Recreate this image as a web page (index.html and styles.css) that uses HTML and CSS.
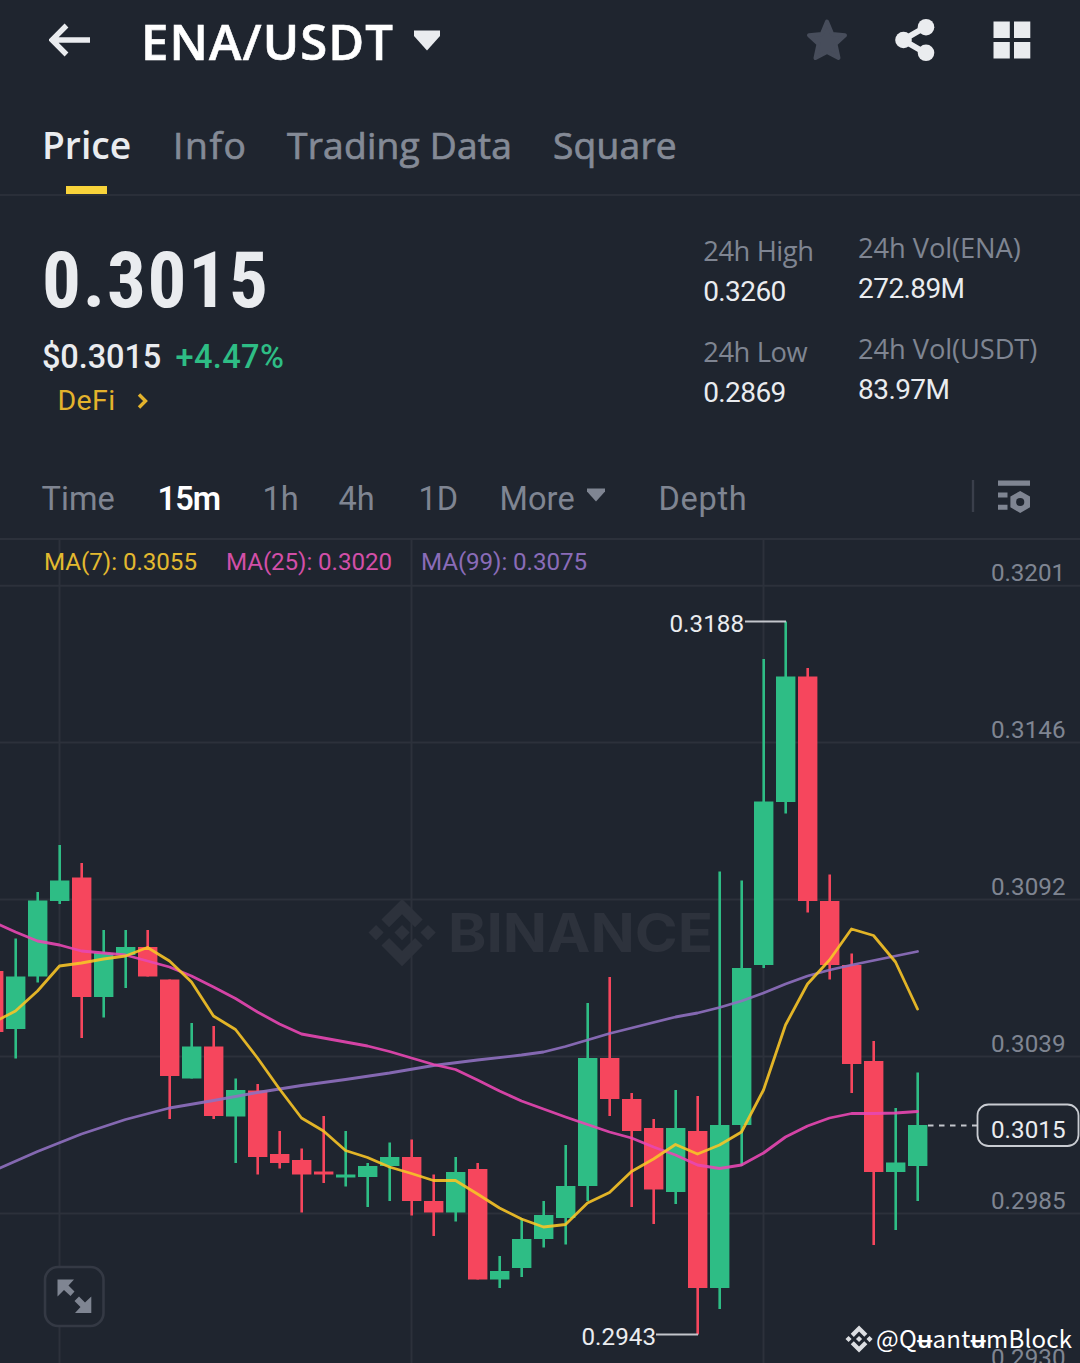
FILE: index.html
```html
<!DOCTYPE html>
<html lang="en">
<head>
<meta charset="utf-8">
<title>ENA/USDT</title>
<link rel="stylesheet" href="styles.css">
</head>
<body>
<header class="header">
  <svg class="back" width="42" height="34" viewBox="0 0 42 34"><path d="M17.500 2.500 3 17 17.500 31.500M3.500 17H41" fill="none" stroke="#eaecef" stroke-width="5.400"/></svg>
  <h1 class="pair">ENA/USDT</h1>
  <svg class="pair-caret" width="26" height="21" viewBox="0 0 26 21"><path d="M0 .5h26V6L13 20.500 0 6Z" fill="#eaecef"/></svg>
  <div class="actions">
    <svg width="42" height="44" viewBox="0 0 42 44"><path d="M21 3.500 26.200 16 39 17.200 29.500 26 32.500 40 21 34 9.500 40 12.500 26 3 17.200 15.800 16Z" fill="#474d5b" stroke="#474d5b" stroke-width="4" stroke-linejoin="round"/></svg>
    <svg width="40" height="44" viewBox="0 0 40 44"><path d="M30.500 9 8 22 30.500 35" fill="none" stroke="#eaecef" stroke-width="6"/><circle cx="8.500" cy="22" r="8.300" fill="#eaecef"/><circle cx="31" cy="9.200" r="8.300" fill="#eaecef"/><circle cx="31" cy="34.800" r="8.300" fill="#eaecef"/></svg>
    <svg width="38" height="44" viewBox="0 0 38 44"><path d="M.5 3.500h16.300V20H.5zM21 3.500h16.300V20H21zM.5 24h16.300v16.500H.5zM21 24h16.300v16.500H21z" fill="#eaecef"/></svg>
  </div>
</header>

<nav class="tabs">
  <span class="tab tab-active">Price</span>
  <span class="tab tab-wide">Info</span>
  <span class="tab">Trading Data</span>
  <span class="tab">Square</span>
</nav>

<section class="summary">
  <div class="price-block">
    <div class="last-price">0.3015</div>
    <div class="price-row"><span class="fiat">$0.3015</span><span class="change">+4.47%</span></div>
    <div class="category">DeFi<svg width="12" height="18" viewBox="0 0 12 18"><path d="M2 2.500 8.500 9 2 15.500" fill="none" stroke="#e3b32c" stroke-width="3.400"/></svg></div>
  </div>
  <div class="stats">
    <div class="stat"><span class="label">24h High</span><span class="value">0.3260</span></div>
    <div class="stat"><span class="label">24h Low</span><span class="value">0.2869</span></div>
  </div>
  <div class="stats stats-volume">
    <div class="stat"><span class="label">24h Vol(ENA)</span><span class="value">272.89M</span></div>
    <div class="stat"><span class="label">24h Vol(USDT)</span><span class="value">83.97M</span></div>
  </div>
</section>

<nav class="intervals">
  <span>Time</span>
  <span class="interval-active">15m</span>
  <span>1h</span>
  <span>4h</span>
  <span>1D</span>
  <span class="more">More<svg width="18" height="14" viewBox="0 0 18 14"><path d="M0 .5h18V3.500L9 13.500 0 3.500Z" fill="#7f8592"/></svg></span>
  <span class="depth">Depth</span>
  <svg class="settings" width="60" height="36" viewBox="0 0 60 36"><path d="M2 2V34" stroke="#3a3f4b" stroke-width="2.400"/><path d="M27 2.500h32v5.300H27zM27 14.500h9.500v5H27zM27 26.700h9.500v5H27z" fill="#7f8592"/><path fill-rule="evenodd" d="M49.200 13 59 18.500v10.800L49.200 35l-9.800-5.700V18.500ZM49.200 19.900a4.100 4.100 0 1 0 0 8.200 4.100 4.100 0 0 0 0-8.200Z" fill="#7f8592"/></svg>
</nav>

<main class="chart">
  <svg id="plot" width="1080" height="825" viewBox="0 538 1080 825">
    <g class="grid">
      <path d="M0 539H1080M0 585.800H1080M0 742.500H1080M0 899.500H1080M0 1056.500H1080M0 1213.500H1080M59.500 539V1363M411.500 539V1363M763.500 539V1363"/>
    </g>
    <g class="brand">
      <path transform="translate(368.500 899) scale(2.800)" d="M16.624 13.920l2.717 2.715-7.353 7.353-7.353-7.352 2.717-2.716 4.636 4.660 4.636-4.660zm4.637-4.637L24 12l-2.715 2.716L18.568 12l2.692-2.716zm-9.272.001l2.716 2.691-2.716 2.717L9.272 12l2.716-2.715zm-9.272-.001L5.409 12l-2.691 2.692L0 12l2.716-2.716zM11.989.012l7.353 7.329-2.717 2.715-4.636-4.636-4.636 4.660-2.717-2.715z"/>
      <text x="448" y="951.500" textLength="265" lengthAdjust="spacingAndGlyphs">BINANCE</text>
    </g>
    <g id="candles"></g>
    <g class="averages">
      <polyline class="ma99" points="0,1168 37.500,1151.500 81.500,1134 125.500,1119.500 169.500,1108 213.500,1100.500 257.500,1092.500 301.500,1085.500 345.500,1079.500 389.500,1073 433.500,1065.500 477.500,1060 521.500,1055 543.500,1052 565.500,1046.500 587.500,1040 609.500,1033.500 631.500,1028 675.500,1017 697.500,1013 719.500,1007.500 741.500,1001 763.500,993 785.500,984 807.500,976 829.500,970 851.500,965 895.500,956 917.500,951.500"/>
      <polyline class="ma25" points="0,925 15.500,932 37.500,941 59.500,945 81.500,951 103.500,953 125.500,955 147.500,961 169.500,967 191.500,976 213.500,987 235.500,998.500 257.500,1012 279.500,1024 301.500,1034 323.500,1038 345.500,1042 367.500,1046 389.500,1051.500 411.500,1058 433.500,1064.500 455.500,1069.500 477.500,1080 499.500,1091 521.500,1101 543.500,1109 565.500,1117 587.500,1124.500 609.500,1132 631.500,1138 653.500,1147 675.500,1155 697.500,1165 719.500,1168.500 741.500,1165 763.500,1153 785.500,1137 807.500,1126 829.500,1118 851.500,1113.500 873.500,1113.500 895.500,1113 917.500,1111.500"/>
      <polyline class="ma7" points="0,1019 15.500,1011 37.500,991 59.500,966 81.500,963 103.500,959 125.500,956 147.500,947.500 169.500,961 191.500,982 213.500,1016 235.500,1029.500 257.500,1058 279.500,1089 301.500,1118 323.500,1131 345.500,1150.500 367.500,1157.500 389.500,1167 411.500,1173.500 433.500,1180.500 455.500,1180.500 477.500,1194 499.500,1208 521.500,1219 543.500,1227 565.500,1224.500 587.500,1203 609.500,1192.500 631.500,1171.500 653.500,1159 675.500,1144.500 697.500,1154 719.500,1145 741.500,1132 763.500,1090 785.500,1025 807.500,984 829.500,960 851.500,929 873.500,935.500 895.500,962 917.500,1009"/>
    </g>
    <g class="legend">
      <text x="44" y="570.300" textLength="153" fill="#e3b92f">MA(7): 0.3055</text>
      <text x="226" y="570.300" textLength="166" fill="#d24fa8">MA(25): 0.3020</text>
      <text x="421" y="570.300" textLength="166" fill="#8a6cb8">MA(99): 0.3075</text>
    </g>
    <g class="axis">
      <text x="991" y="580.500" textLength="74">0.3201</text>
      <text x="991" y="737.500" textLength="74.500">0.3146</text>
      <text x="991" y="894.500" textLength="74.500">0.3092</text>
      <text x="991" y="1051.500" textLength="74.500">0.3039</text>
      <text x="991" y="1208.500" textLength="74.500">0.2985</text>
      <text x="991" y="1365.500" textLength="74.500">0.2930</text>
    </g>
    <g class="marks">
      <path d="M745 621.500H786M656 1334.500H698"/>
      <path d="M928 1125.500H977" stroke-dasharray="5.500 5.500"/>
      <rect x="977.500" y="1104.500" width="101" height="41.500" rx="11"/>
      <text x="669.500" y="631.500" textLength="74.500">0.3188</text>
      <text x="581.500" y="1344.500" textLength="74.500">0.2943</text>
      <text x="991" y="1137.500" textLength="74.500">0.3015</text>
    </g>
    <g class="expand">
      <rect x="45" y="1267" width="58.500" height="59" rx="13"/>
      <path d="M57.500 1279.500H74L68.500 1285.500 74.500 1291.500 70.500 1296 64 1290 57.500 1296.500ZM91.300 1313H75L80.500 1307 74.500 1301 79 1296.500 85 1302.500 91.300 1296.500Z"/>
    </g>
    <g class="credit">
      <path transform="translate(845.500 1325.500) scale(1.130)" d="M16.624 13.920l2.717 2.715-7.353 7.353-7.353-7.352 2.717-2.716 4.636 4.660 4.636-4.660zm4.637-4.637L24 12l-2.715 2.716L18.568 12l2.692-2.716zm-9.272.001l2.716 2.691-2.716 2.717L9.272 12l2.716-2.715zm-9.272-.001L5.409 12l-2.691 2.692L0 12l2.716-2.716zM11.989.012l7.353 7.329-2.717 2.715-4.636-4.636-4.636 4.660-2.717-2.715z"/>
      <text x="876" y="1347.500" textLength="196">@Q<tspan class="barred">ʉ</tspan>ant<tspan class="barred">ʉ</tspan>mBlock</text>
    </g>
  </svg>
</main>
<script src="chart.js"></script>
</body>
</html>
```
FILE: styles.css
```css
* { box-sizing: border-box; }

body {
  margin: 0;
  width: 1080px;
  height: 1363px;
  overflow: hidden;
  background: #1f252f;
  color: #eaecef;
  font-family: Roboto, "Liberation Sans", sans-serif;
}

svg { display: block; flex: none; }

.header {
  display: flex;
  align-items: center;
  height: 81px;
  padding: 0 49.5px 0 49px;
}

.back, .actions { margin-top: -1px; }

.pair {
  margin: 1px 0 0 50px;
  width: 273px;
  font: 600 49px/80px "Open Sans", sans-serif;
  letter-spacing: 1.1px;
  -webkit-text-stroke: 0.6px #fff;
  color: #fff;
  white-space: nowrap;
}

.pair-caret { margin-top: -1px; }

.actions {
  display: flex;
  align-items: center;
  margin-left: auto;
}

.actions svg:nth-child(2) { margin-left: 47px; }
.actions svg:nth-child(3) { margin-left: 58px; }

.tabs {
  display: grid;
  grid-template-columns: 131px 114px 266px auto;
  height: 115px;
  padding: 44px 0 0 42px;
  border-bottom: 2px solid #2a2f39;
}

.tab {
  position: relative;
  font: 500 37.2px/40px "Open Sans", sans-serif;
  letter-spacing: 0.2px;
  -webkit-text-stroke: 0.7px #848a96;
  color: #848a96;
  white-space: nowrap;
}

.tab-wide { letter-spacing: 1.6px; }

.tab-active {
  color: #eaecef;
  font-weight: 600;
  letter-spacing: 0;
  -webkit-text-stroke: 0;
}

.tab-active::after {
  content: "";
  position: absolute;
  left: 24px;
  bottom: 0;
  width: 41px;
  height: 8.5px;
  background: #f8d33a;
}

.summary {
  display: flex;
  height: 260px;
  padding-left: 42px;
}

.price-block {
  width: 661.5px;
  padding-top: 45px;
}

.last-price {
  font-size: 77px;
  line-height: 80px;
  font-weight: 700;
  font-stretch: 75%;
  letter-spacing: 1.8px;
}

.price-row {
  display: flex;
  margin-top: 15.5px;
  font-size: 32.5px;
  line-height: 40px;
  font-weight: 500;
}

.fiat { width: 133.5px; letter-spacing: -0.1px; }
.change { color: #2ebd85; letter-spacing: 0.4px; }

.category {
  display: flex;
  align-items: center;
  gap: 21px;
  margin-top: 6px;
  padding-left: 15.5px;
  font-size: 28.5px;
  line-height: 36px;
  letter-spacing: 0.4px;
  color: #e3b32c;
}

.stats {
  display: flex;
  flex-direction: column;
  gap: 24.6px;
  width: 155px;
  padding-top: 37px;
}

.stats-volume {
  width: 222px;
  padding-top: 34px;
}

.stat {
  display: flex;
  flex-direction: column;
  gap: 4.5px;
  font-size: 28px;
  line-height: 36px;
  white-space: nowrap;
}

.label {
  font-family: "Open Sans", sans-serif;
  font-size: 27.3px;
  letter-spacing: -0.1px;
  color: #7f8592;
}

.stats:not(.stats-volume) .label { letter-spacing: -0.4px; }

.value { letter-spacing: -0.6px; }

.intervals {
  display: grid;
  grid-template-columns: 116px 105px 76px 80px 81px 159px 312px auto;
  height: 82px;
  padding: 23px 0 0 41.5px;
  font-size: 32.5px;
  line-height: 40px;
  letter-spacing: 0.1px;
  color: #7f8592;
}

.interval-active { color: #fff; font-weight: 600; letter-spacing: -0.9px; }
.more { display: flex; gap: 12px; }
.more svg { margin-top: 9px; }
.depth { letter-spacing: 0.7px; }
.settings { margin-top: -1px; }

.grid path { fill: none; stroke: #2c313b; stroke-width: 2; }

.brand { fill: #2d323c; }
.brand text { font: 700 53px Inter, sans-serif; }

.up { fill: #2ebd85; }
.down { fill: #f6465d; }

.averages polyline {
  fill: none;
  stroke-width: 2.8;
  stroke-linejoin: round;
  stroke-linecap: round;
  opacity: 0.9;
}

.ma7 { stroke: #f7c427; }
.ma25 { stroke: #e847b2; }
.ma99 { stroke: #8f70c0; }

.legend text,
.axis text,
.marks text {
  font-size: 24.2px;
}

.axis text { fill: #7f8592; }

.marks path { fill: none; stroke: #c3c6cc; stroke-width: 2; }
.marks rect { fill: #1f252f; stroke: #c9ccd2; stroke-width: 1.8; }
.marks text { fill: #eaecef; }

.expand rect { fill: #1f252f; stroke: #343944; stroke-width: 2.6; }
.expand path { fill: #7f8592; }

.credit path { fill: #dcdee2; }
.credit text { fill: #fff; font: 400 24px "Noto Sans CJK SC", sans-serif; }
.credit .barred { font-family: "Noto Sans", sans-serif; font-weight: 600; }
```
FILE: chart.js
```js
// Each candle: [direction, high, open/close top, open/close bottom, low] in plot units.
const candles = [
  ["down", 971, 971, 1032, 1032], ["up", 938.5, 976.5, 1029, 1058.5],
  ["up", 892, 900.5, 976.5, 982.5], ["up", 845, 880.5, 901, 904],
  ["down", 863, 877.5, 997, 1038], ["up", 930, 953, 997, 1017.5],
  ["up", 930, 947, 955, 988], ["down", 930, 947, 976.5, 976.5],
  ["down", 979.5, 979.5, 1076, 1119], ["up", 1023, 1046.5, 1078.5, 1078.5],
  ["down", 1026, 1046.5, 1116, 1119], ["up", 1078.5, 1090, 1116.5, 1163],
  ["down", 1084, 1090.5, 1157, 1174.5], ["down", 1131, 1154, 1163, 1168.5],
  ["down", 1148.5, 1160, 1174.5, 1212.5], ["down", 1116, 1171.5, 1174.5, 1183],
  ["up", 1131, 1174.5, 1177.5, 1186.5], ["up", 1163, 1166, 1177, 1207],
  ["up", 1142.5, 1157, 1166, 1201], ["down", 1139.5, 1157, 1201, 1215.5],
  ["down", 1174.5, 1201, 1212.5, 1236], ["up", 1157, 1172, 1212.5, 1221.5],
  ["down", 1163, 1169, 1279.5, 1279.5], ["up", 1256, 1271, 1279.5, 1288],
  ["up", 1218, 1239, 1268, 1277], ["up", 1201, 1215, 1239, 1247.5],
  ["up", 1145, 1186, 1218, 1244.5], ["up", 1003, 1058, 1186, 1201],
  ["down", 977, 1058, 1099, 1116], ["down", 1093, 1099, 1131, 1207],
  ["down", 1119, 1128, 1189.5, 1224], ["up", 1090, 1128, 1192, 1204],
  ["down", 1096, 1131, 1288, 1334.5], ["up", 871.5, 1125, 1288, 1309],
  ["up", 880.5, 968, 1125, 1166], ["up", 659, 801.5, 965, 968],
  ["up", 621.5, 676.5, 802, 813.5], ["down", 668, 676.5, 901, 912.5],
  ["down", 874.5, 901, 965, 979.5], ["down", 953.5, 965, 1064, 1093],
  ["down", 1041, 1061, 1172, 1245], ["up", 1108, 1162.5, 1172, 1230],
  ["up", 1072.5, 1125, 1166, 1201]
];

const layer = document.getElementById("candles");

function bar(kind, x, y, width, height) {
  const rect = document.createElementNS("http://www.w3.org/2000/svg", "rect");
  rect.setAttribute("class", kind);
  rect.setAttribute("x", x);
  rect.setAttribute("y", y);
  rect.setAttribute("width", width);
  rect.setAttribute("height", height);
  layer.appendChild(rect);
}

candles.forEach(([kind, high, top, bottom, low], i) => {
  const center = -6.3 + i * 22;
  bar(kind, center - 1.3, high, 2.6, low - high);
  bar(kind, center - 9.7, top, 19.4, bottom - top);
});
```
